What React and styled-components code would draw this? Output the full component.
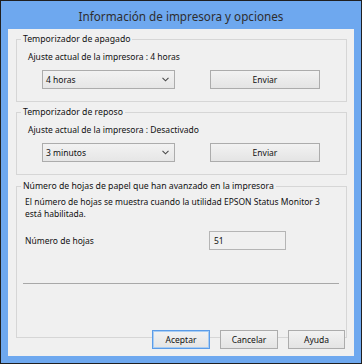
import React from 'react';
import styled, { createGlobalStyle } from 'styled-components';

const Global = createGlobalStyle`
  html, body { margin: 0; padding: 0; background: #ffffff; }
  body { font-family: "Noto Sans", "Open Sans", sans-serif; }
  * { box-sizing: border-box; }
`;

const Window = styled.div`
  width: 362px;
  height: 364px;
  border: 1px solid #1f1f1f;
  background: #6ea8ef;
  display: flex;
  flex-direction: column;
  padding: 0 7px 7px 7px;
`;

const TitleBar = styled.div`
  height: 28px;
  display: flex;
  align-items: center;
  justify-content: center;
  font-size: 11.7px;
  color: #2e2e2e;
  padding-top: 1px;
`;

const Client = styled.div`
  flex: 1;
  background: #f0f0f0;
  padding: 3px 7px 0 8px;
  display: flex;
  flex-direction: column;
  font-size: 8.5px;
  color: #111;
`;

const Group = styled.fieldset`
  margin: ${p => p.$top || 0}px 0 0 0;
  padding: 0;
  border: 1px solid #d6d6d6;
  min-width: 0;
`;

const Legend = styled.legend`
  margin-left: 4px;
  padding: 0 2px;
  line-height: 14px;
  font-size: 8.7px;
  color: #111;
`;

const Body = styled.div`
  padding: ${p => p.$pad};
  display: flex;
  flex-direction: column;
`;

const Line = styled.div`
  line-height: 12px;
  white-space: nowrap;
`;

const ControlRow = styled.div`
  display: flex;
  align-items: center;
  gap: 35px;
  margin-top: 7px;
  margin-left: 14px;
`;

const Select = styled.div`
  width: 133px;
  height: 19px;
  border: 1px solid #acacac;
  background: linear-gradient(#f2f2f2, #e6e6e6);
  display: flex;
  align-items: center;
  justify-content: space-between;
  padding: 0 5px 0 3px;
`;

const Button = styled.div`
  width: ${p => p.$w}px;
  height: 19px;
  border: 1px solid ${p => (p.$default ? '#5b9ce8' : '#acacac')};
  box-shadow: ${p => (p.$default ? 'inset 0 0 0 1px #a9cdf3' : 'none')};
  background: linear-gradient(#f2f2f2, #e4e4e4);
  display: flex;
  align-items: center;
  justify-content: center;
  font-size: 8.5px;
  color: #111;
`;

const Paragraph = styled.div`
  line-height: 12px;
  width: 310px;
`;

const FieldRow = styled.div`
  display: grid;
  grid-template-columns: 184px 77px;
  align-items: center;
  margin-top: 11px;
`;

const ReadOnly = styled.div`
  height: 19px;
  border: 1px solid #b5b5b5;
  background: #f0f0f0;
  display: flex;
  align-items: center;
  padding-left: 4px;
`;

const Separator = styled.div`
  height: 1px;
  background: #a8a8a8;
  margin: 33px 7px 53px -2px;
`;

const Footer = styled.div`
  display: flex;
  justify-content: flex-end;
  gap: 10px;
  margin-top: -8px;
  padding-right: 2px;
`;

const Chevron = () => (
  <svg width="7" height="5" viewBox="0 0 7 5">
    <path d="M0.5 0.8 L3.5 3.8 L6.5 0.8" fill="none" stroke="#4a4a4a" strokeWidth="1.1" />
  </svg>
);

const TimerGroup = ({ title, status, value, top }) => (
  <Group $top={top}>
    <Legend>{title}</Legend>
    <Body $pad="5px 0 12px 11px">
      <Line>Ajuste actual de la impresora : {status}</Line>
      <ControlRow>
        <Select>
          <span>{value}</span>
          <Chevron />
        </Select>
        <Button $w={110}>Enviar</Button>
      </ControlRow>
    </Body>
  </Group>
);

export default function App() {
  return (
    <>
      <Global />
      <Window>
        <TitleBar>Información de impresora y opciones</TitleBar>
        <Client>
          <TimerGroup title="Temporizador de apagado" status="4 horas" value="4 horas" />
          <TimerGroup title="Temporizador de reposo" status="Desactivado" value="3 minutos" top={3} />
          <Group $top={4}>
            <Legend>Número de hojas de papel que han avanzado en la impresora</Legend>
            <Body $pad="3px 0 0 8px">
              <Paragraph>
                El número de hojas se muestra cuando la utilidad EPSON Status Monitor 3 está habilitada.
              </Paragraph>
              <FieldRow>
                <span>Número de hojas</span>
                <ReadOnly>51</ReadOnly>
              </FieldRow>
              <Separator />
            </Body>
          </Group>
          <Footer>
            <Button $w={58} $default>Aceptar</Button>
            <Button $w={58}>Cancelar</Button>
            <Button $w={57}>Ayuda</Button>
          </Footer>
        </Client>
      </Window>
    </>
  );
}
